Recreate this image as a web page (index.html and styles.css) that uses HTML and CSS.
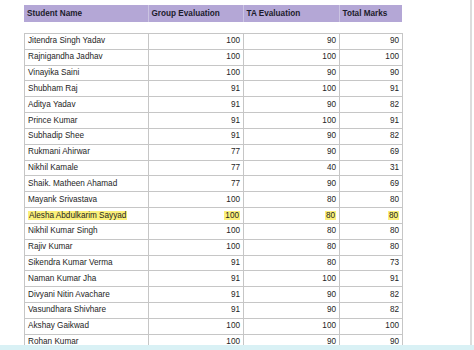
FILE: index.html
```html
<!DOCTYPE html>
<html>
<head>
<meta charset="utf-8">
<link rel="stylesheet" href="styles.css">
</head>
<body>
<div class="page">
  <div class="sheet">
    <table class="head">
      <tr>
        <th class="c1">Student Name</th>
        <th class="c2">Group Evaluation</th>
        <th class="c3">TA Evaluation</th>
        <th class="c4">Total Marks</th>
      </tr>
    </table>
    <table class="data">
      <tr><td class="c1">Jitendra Singh Yadav</td><td class="c2">100</td><td class="c3">90</td><td class="c4">90</td></tr>
      <tr><td class="c1">Rajnigandha Jadhav</td><td class="c2">100</td><td class="c3">100</td><td class="c4">100</td></tr>
      <tr><td class="c1">Vinayika Saini</td><td class="c2">100</td><td class="c3">90</td><td class="c4">90</td></tr>
      <tr><td class="c1">Shubham Raj</td><td class="c2">91</td><td class="c3">100</td><td class="c4">91</td></tr>
      <tr><td class="c1">Aditya Yadav</td><td class="c2">91</td><td class="c3">90</td><td class="c4">82</td></tr>
      <tr><td class="c1">Prince Kumar</td><td class="c2">91</td><td class="c3">100</td><td class="c4">91</td></tr>
      <tr><td class="c1">Subhadip Shee</td><td class="c2">91</td><td class="c3">90</td><td class="c4">82</td></tr>
      <tr><td class="c1">Rukmani Ahirwar</td><td class="c2">77</td><td class="c3">90</td><td class="c4">69</td></tr>
      <tr><td class="c1">Nikhil Kamale</td><td class="c2">77</td><td class="c3">40</td><td class="c4">31</td></tr>
      <tr><td class="c1">Shaik. Matheen Ahamad</td><td class="c2">77</td><td class="c3">90</td><td class="c4">69</td></tr>
      <tr><td class="c1">Mayank Srivastava</td><td class="c2">100</td><td class="c3">80</td><td class="c4">80</td></tr>
      <tr class="hl"><td class="c1"><span class="mark">Alesha Abdulkarim Sayyad</span></td><td class="c2"><span class="mark">100</span></td><td class="c3"><span class="mark">80</span></td><td class="c4"><span class="mark">80</span></td></tr>
      <tr><td class="c1">Nikhil Kumar Singh</td><td class="c2">100</td><td class="c3">80</td><td class="c4">80</td></tr>
      <tr><td class="c1">Rajiv Kumar</td><td class="c2">100</td><td class="c3">80</td><td class="c4">80</td></tr>
      <tr><td class="c1">Sikendra Kumar Verma</td><td class="c2">91</td><td class="c3">80</td><td class="c4">73</td></tr>
      <tr><td class="c1">Naman Kumar Jha</td><td class="c2">91</td><td class="c3">100</td><td class="c4">91</td></tr>
      <tr><td class="c1">Divyani Nitin Avachare</td><td class="c2">91</td><td class="c3">90</td><td class="c4">82</td></tr>
      <tr><td class="c1">Vasundhara Shivhare</td><td class="c2">91</td><td class="c3">90</td><td class="c4">82</td></tr>
      <tr><td class="c1">Akshay Gaikwad</td><td class="c2">100</td><td class="c3">100</td><td class="c4">100</td></tr>
      <tr><td class="c1">Rohan Kumar</td><td class="c2">100</td><td class="c3">90</td><td class="c4">90</td></tr>
    </table>
  </div>
  <div class="edge"></div>
</div>
<div class="bottombar"></div>
</body>
</html>
```
FILE: styles.css
```css
html, body {
  margin: 0;
  padding: 0;
  background: #ffffff;
  width: 474px;
  height: 350px;
  overflow: hidden;
}
body {
  font-family: "Liberation Sans", Arial, sans-serif;
  color: #1e1e1e;
}
.page {
  display: flex;
  height: 345px;
  overflow: hidden;
}
.sheet {
  flex: 0 0 auto;
  padding: 5px 0 0 24px;
  width: 378px;
}
.edge {
  margin-left: auto;
  margin-right: 2px;
  width: 2px;
  background: #dcdcdc;
  height: 345px;
}
table {
  border-collapse: collapse;
  table-layout: fixed;
  width: 378px;
  font-size: 8.2px;
}
th, td {
  box-sizing: border-box;
}
.c1 { width: 124px; }
.c2 { width: 95px; }
.c3 { width: 96px; }
.c4 { width: 63px; }
.head {
  background: #b4a7d6;
}
.head th {
  height: 17px;
  padding: 0 3px;
  text-align: left;
  font-weight: bold;
  color: #1c1c2c;
  border-left: 1px solid #cbc4e2;
  white-space: nowrap;
}
.head th:first-child { border-left: none; }
.data {
  margin-top: 11px;
}
.data tr {
  height: 15.84px;
}
.data td {
  border: 1px solid #c6c6c6;
  padding: 0 3px;
  text-align: right;
  white-space: nowrap;
  overflow: hidden;
  line-height: 10px;
}
.data td.c1 {
  text-align: left;
}
.mark {
  background: #fbf07a;
  padding: 0 1px;
}
.bottombar {
  height: 5px;
  background: #d9f1f5;
}
```
